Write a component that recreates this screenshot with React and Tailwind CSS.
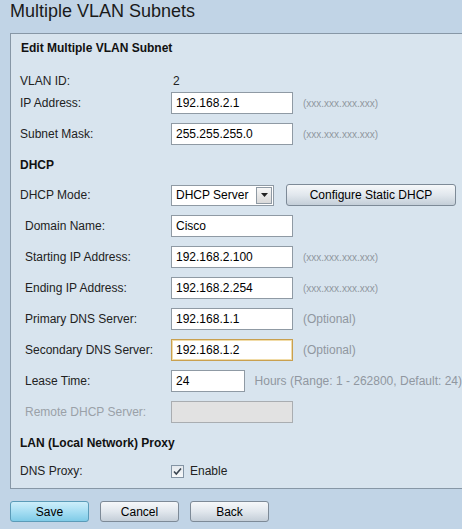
const font = { fontFamily: '"Liberation Sans", Arial, sans-serif' };

function Field({ value, width = 'w-[122px]', focused, disabled }) {
  let cls = 'border-[#8f9aa4] bg-white';
  if (focused) cls = 'border-[#c9a04f] bg-white shadow-[inset_0_0_0_1px_#f1dca8]';
  if (disabled) cls = 'border-[#a9adb1] bg-[#e2e2e2]';
  return (
    <div className={`${width} h-[22px] border ${cls} flex items-center pl-[4px] text-[12px] text-black`}>
      {value}
    </div>
  );
}

function Row({ label, indent, muted, className = '', children }) {
  return (
    <div className={`flex items-center h-[22px] whitespace-nowrap ${className}`}>
      <div
        className={`w-[151px] shrink-0 text-[12px] ${indent ? 'pl-[5px]' : ''} ${muted ? 'text-[#9aa1a8]' : 'text-[#222]'}`}
      >
        {label}
      </div>
      {children}
    </div>
  );
}

function Hint({ children, small }) {
  return <span className={`ml-[10px] text-[#9097a0] ${small ? 'text-[10px]' : 'text-[12px]'}`}>{children}</span>;
}

function Btn({ children, primary, className = '' }) {
  const skin = primary
    ? 'border-[#5b9bb8] bg-gradient-to-b from-[#cdeefa] via-[#a6def3] to-[#7fcbe7]'
    : 'border-[#7d8a97] bg-gradient-to-b from-[#f6f8fa] via-[#e1e7ed] to-[#c4ced8]';
  return (
    <div className={`h-[21px] border rounded-[3px] flex items-center justify-center text-[12px] text-black ${skin} ${className}`}>
      {children}
    </div>
  );
}

export default function App() {
  return (
    <div className="w-[462px] h-[529px] bg-[#c1d4e6] overflow-hidden" style={font}>
      <div className="h-[33px] pl-[10px] pt-[1px] text-[18px] leading-[21px] text-[#1a1a1a]">Multiple VLAN Subnets</div>

      <div className="ml-[10px] border-t border-l border-b border-[#8797a6] bg-[#d8e4ee] pl-[9px] pb-[6px]">
        <div className="h-[28px] flex items-center pl-[1px] text-[12px] font-bold text-[#111]">Edit Multiple VLAN Subnet</div>

        <Row label="VLAN ID:" className="mt-[8px]">
          <span className="text-[12px] text-[#222] pl-[2px]">2</span>
        </Row>
        <Row label="IP Address:">
          <Field value="192.168.2.1" />
          <Hint small>(xxx.xxx.xxx.xxx)</Hint>
        </Row>
        <Row label="Subnet Mask:" className="mt-[9px]">
          <Field value="255.255.255.0" />
          <Hint small>(xxx.xxx.xxx.xxx)</Hint>
        </Row>
        <div className="mt-[9px] h-[22px] flex items-center text-[12px] font-bold text-[#111]">DHCP</div>
        <Row label="DHCP Mode:" className="mt-[8px]">
          <div className="flex items-center h-[21px] border border-[#8f9aa4] bg-white">
            <div className="w-[84px] pl-[4px] text-[12px] text-black">DHCP Server</div>
            <div className="w-[16px] h-[17px] mr-[1px] border border-[#8f9aa4] bg-gradient-to-b from-[#f7f7f7] to-[#d9d9d9] flex items-center justify-center">
              <svg width="7" height="4" viewBox="0 0 7 4">
                <path d="M0 0h7L3.5 4z" fill="#222" />
              </svg>
            </div>
          </div>
          <Btn className="ml-[12px] w-[170px] h-[22px]">Configure Static DHCP</Btn>
        </Row>
        <Row label="Domain Name:" indent className="mt-[9px]">
          <Field value="Cisco" />
        </Row>
        <Row label="Starting IP Address:" indent className="mt-[9px]">
          <Field value="192.168.2.100" />
          <Hint small>(xxx.xxx.xxx.xxx)</Hint>
        </Row>
        <Row label="Ending IP Address:" indent className="mt-[9px]">
          <Field value="192.168.2.254" />
          <Hint small>(xxx.xxx.xxx.xxx)</Hint>
        </Row>
        <Row label="Primary DNS Server:" indent className="mt-[9px]">
          <Field value="192.168.1.1" />
          <Hint>(Optional)</Hint>
        </Row>
        <Row label="Secondary DNS Server:" indent className="mt-[9px]">
          <Field value="192.168.1.2" focused />
          <Hint>(Optional)</Hint>
        </Row>
        <Row label="Lease Time:" indent className="mt-[9px]">
          <Field value="24" width="w-[77px]" />
          <Hint>Hours (Range: 1 - 262800, Default: 24)</Hint>
        </Row>
        <Row label="Remote DHCP Server:" indent muted className="mt-[9px]">
          <Field value="" disabled />
        </Row>
        <div className="mt-[9px] h-[22px] flex items-center text-[12px] font-bold text-[#111]">LAN (Local Network) Proxy</div>
        <Row label="DNS Proxy:" className="mt-[6px]">
          <div className="w-[13px] h-[13px] border border-[#8494a4] bg-gradient-to-b from-[#e4e9ee] to-[#f8f9fa] flex items-center justify-center">
            <svg width="9" height="9" viewBox="0 0 9 9">
              <path d="M1 4.5l2.3 2.5L8 1.5" fill="none" stroke="#3a4550" strokeWidth="1.6" />
            </svg>
          </div>
          <span className="ml-[6px] text-[12px] text-[#222]">Enable</span>
        </Row>
      </div>

      <div className="flex gap-[11px] pl-[10px] mt-[12px]">
        <Btn primary className="w-[79px]">Save</Btn>
        <Btn className="w-[79px]">Cancel</Btn>
        <Btn className="w-[79px]">Back</Btn>
      </div>
    </div>
  );
}
